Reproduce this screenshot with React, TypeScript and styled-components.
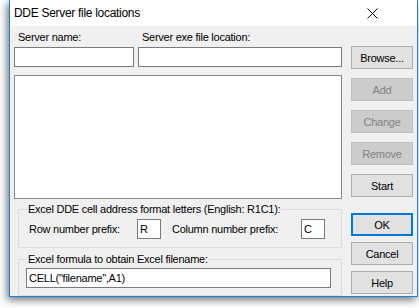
import styled, { createGlobalStyle } from "styled-components";

const Global = createGlobalStyle`
    html, body {
        margin: 0;
        padding: 0;
        background: #ffffff;
    }
    body {
        font-family: "Liberation Sans", Arial, sans-serif;
        font-size: 11px;
        letter-spacing: -0.25px;
        color: #000000;
    }
`;

const Page = styled.div`
    width: 419px;
    height: 308px;
    padding-left: 9px;
    box-sizing: border-box;
    overflow: hidden;
`;

const Window = styled.div`
    width: 409px;
    height: 297px;
    box-sizing: border-box;
    border: 1px solid #1883d7;
    border-top: none;
    background: #f0f0f0;
    box-shadow: -2px 3px 8px rgba(0, 0, 0, 0.55);
    display: flex;
    flex-direction: column;
`;

const TitleBar = styled.div`
    height: 26px;
    background: #ffffff;
    display: flex;
    align-items: center;
    justify-content: space-between;
    padding: 0 0 0 4px;
    font-size: 12px;
    letter-spacing: -0.3px;
`;

const CloseBox = styled.div`
    width: 46px;
    height: 26px;
    display: flex;
    align-items: center;
    justify-content: center;
    margin-right: 22px;
`;

const Body = styled.div`
    flex: 1;
    display: grid;
    grid-template-columns: 328px 62px;
    column-gap: 9px;
    padding: 0 4px 0 4px;
`;

const LeftCol = styled.div`
    display: flex;
    flex-direction: column;
`;

const LabelRow = styled.div`
    display: grid;
    grid-template-columns: 124px 1fr;
    height: 20px;
    align-items: center;
    padding-left: 4px;
    margin-top: 1px;
`;

const InputRow = styled.div`
    display: grid;
    grid-template-columns: 120px 1fr;
    column-gap: 4px;
`;

const TextBox = styled.div<{ $w?: number }>`
    height: 20px;
    box-sizing: border-box;
    border: 1px solid #7a7a7a;
    background: #ffffff;
    padding: 0 2px;
    display: flex;
    align-items: center;
    width: ${(p) => (p.$w ? `${p.$w}px` : "auto")};
    white-space: nowrap;
`;

const ListBox = styled.div`
    height: 124px;
    box-sizing: border-box;
    border: 1px solid #828790;
    background: #ffffff;
    margin-top: 8px;
`;

const Group = styled.fieldset<{ $h: number; $top: number }>`
    margin: ${(p) => p.$top}px 0 0 4px;
    width: 324px;
    height: ${(p) => p.$h}px;
    box-sizing: border-box;
    border: 1px solid #dcdcdc;
    padding: 0 0 0 7px;
`;

const Legend = styled.legend`
    padding: 0 1px;
    margin-left: 1px;
    line-height: 14px;
`;

const PrefixRow = styled.div`
    display: grid;
    grid-template-columns: 108px 24px 11px 129px 24px;
    align-items: center;
    margin-top: 3px;
    padding-left: 3px;
`;

const FormulaBox = styled(TextBox)`
    margin-top: 2px;
`;

const RightCol = styled.div`
    display: flex;
    flex-direction: column;
    padding-top: 20px;
`;

const ButtonStack = styled.div<{ $gap: number; $top?: number }>`
    display: flex;
    flex-direction: column;
    gap: ${(p) => p.$gap}px;
    margin-top: ${(p) => p.$top ?? 0}px;
`;

const Button = styled.div<{ $disabled?: boolean; $default?: boolean }>`
    height: 23px;
    box-sizing: border-box;
    display: flex;
    align-items: center;
    justify-content: center;
    background: ${(p) => (p.$disabled ? "#cccccc" : "#e1e1e1")};
    border: ${(p) =>
        p.$default ? "2px solid #0078d7" : p.$disabled ? "1px solid #bfbfbf" : "1px solid #adadad"};
    color: ${(p) => (p.$disabled ? "#838383" : "#000000")};
`;

const CloseIcon = () => (
    <svg width="11" height="11" viewBox="0 0 11 11">
        <path d="M0.5 0.5 L10.5 10.5 M10.5 0.5 L0.5 10.5" stroke="#000" strokeWidth="1" />
    </svg>
);

export default function App() {
    return (
        <Page>
            <Global />
            <Window>
                <TitleBar>
                    <span>DDE Server file locations</span>
                    <CloseBox>
                        <CloseIcon />
                    </CloseBox>
                </TitleBar>
                <Body>
                    <LeftCol>
                        <LabelRow>
                            <span>Server name:</span>
                            <span>Server exe file location:</span>
                        </LabelRow>
                        <InputRow>
                            <TextBox />
                            <TextBox />
                        </InputRow>
                        <ListBox />
                        <Group $h={46} $top={3}>
                            <Legend>Excel DDE cell address format letters (English: R1C1):</Legend>
                            <PrefixRow>
                                <span>Row number prefix:</span>
                                <TextBox>R</TextBox>
                                <span />
                                <span>Column number prefix:</span>
                                <TextBox>C</TextBox>
                            </PrefixRow>
                        </Group>
                        <Group $h={44} $top={4}>
                            <Legend>Excel formula to obtain Excel filename:</Legend>
                            <FormulaBox $w={305}>CELL("filename",A1)</FormulaBox>
                        </Group>
                    </LeftCol>
                    <RightCol>
                        <ButtonStack $gap={9}>
                            <Button>Browse...</Button>
                            <Button $disabled>Add</Button>
                            <Button $disabled>Change</Button>
                            <Button $disabled>Remove</Button>
                            <Button>Start</Button>
                        </ButtonStack>
                        <ButtonStack $gap={6} $top={16}>
                            <Button $default>OK</Button>
                            <Button>Cancel</Button>
                            <Button>Help</Button>
                        </ButtonStack>
                    </RightCol>
                </Body>
            </Window>
        </Page>
    );
}
